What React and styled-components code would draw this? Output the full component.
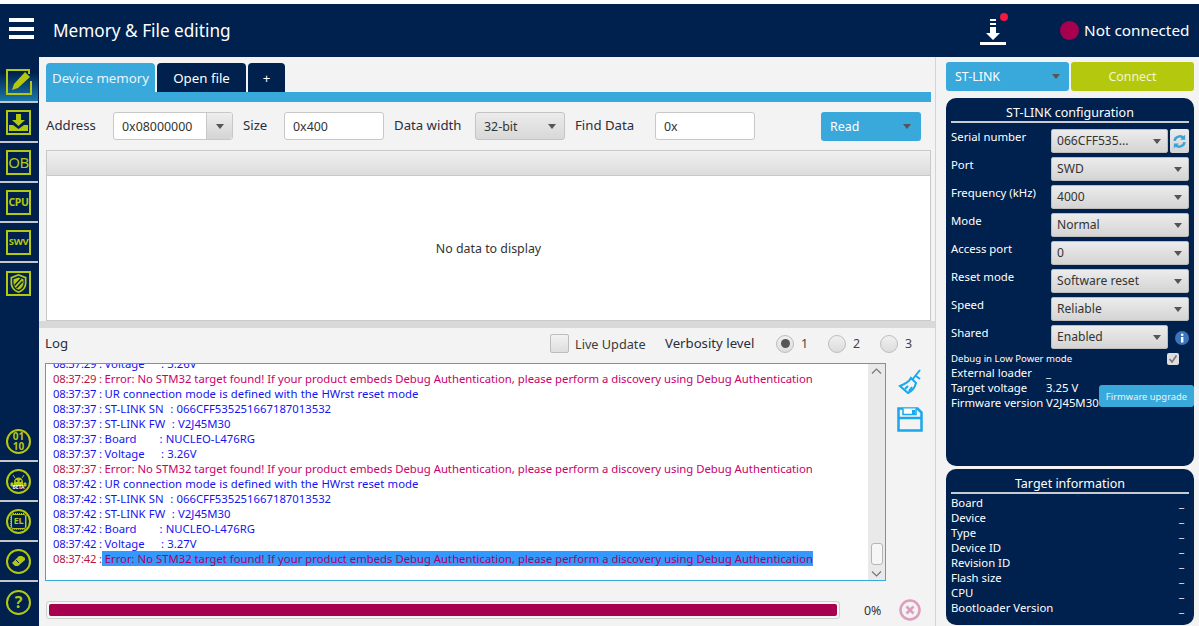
import React from 'react';
import styled, { createGlobalStyle } from 'styled-components';

const navy = '#00214d';
const lime = '#b4c90e';
const sky = '#39a9dc';

const GlobalStyle = createGlobalStyle`
  html, body { margin: 0; padding: 0; background: #fff; }
  body { font-family: 'Noto Sans', 'Open Sans', sans-serif; overflow: hidden; }
  * { box-sizing: border-box; }
`;

const Page = styled.div`
  width: 1199px;
  height: 626px;
  padding-top: 4px;
  display: flex;
  flex-direction: column;
  overflow: hidden;
  background: #fff;
`;

const Header = styled.header`
  height: 53px;
  flex: none;
  background: ${navy};
  display: flex;
  align-items: center;
  color: #fff;
`;

const Burger = styled.div`
  width: 25px;
  margin: -4px 0 0 9px;
  display: flex;
  flex-direction: column;
  gap: 4.5px;
  span { display: block; height: 4px; background: #fff; }
`;

const HeaderTitle = styled.div`
  margin-left: 19px;
  font-size: 17.2px;
  flex: 1;
  margin-top: -1px;
`;

const DownloadWrap = styled.div`
  width: 28px;
  height: 35px;
  margin-right: 52px;
`;

const Status = styled.div`
  display: flex;
  align-items: center;
  width: 130px;
  margin-right: 9px;
  gap: 5px;
  font-size: 15.3px;
  margin-top: -1px;
  white-space: nowrap;
`;

const StatusDot = styled.span`
  width: 19px;
  height: 19px;
  border-radius: 50%;
  background: #a6004f;
  flex: none;
`;

const Body = styled.div`
  flex: 1;
  display: flex;
  min-height: 0;
`;

const Sidebar = styled.nav`
  width: 39px;
  flex: none;
  background: ${navy};
  display: flex;
  flex-direction: column;
  justify-content: space-between;
  padding: 6px 0 4px;
`;

const SideGroup = styled.div`
  display: flex;
  flex-direction: column;
`;

const SideItem = styled.div`
  height: 40px;
  width: 38px;
  display: flex;
  align-items: center;
  padding-left: 6px;
  border-bottom: ${p => (p.$last ? 'none' : '2px solid #c4c8cc')};
  background: ${p => (p.$active ? 'linear-gradient(180deg, #00214d 0%, #00214d 25%, #1a77a8 100%)' : 'transparent')};
`;

const IconBox = styled.div`
  width: 25px;
  height: 25px;
  border: 2px solid ${lime};
  color: ${lime};
  display: flex;
  align-items: center;
  justify-content: center;
  font-weight: ${p => (p.$bold ? 700 : 400)};
  font-size: ${p => p.$size || 11}px;
  line-height: 1;
  overflow: hidden;
  letter-spacing: -0.4px;
`;

const RoundIcon = styled.div`
  position: relative;
  width: 25px;
  height: 25px;
  border-radius: 50%;
  border: 2px solid ${lime};
  color: ${lime};
  display: flex;
  flex-direction: column;
  align-items: center;
  justify-content: center;
  font-weight: 700;
  font-size: ${p => p.$size || 10}px;
  line-height: 10px;
`;

const BitsText = styled.span`
  width: 14px;
  text-align: center;
  white-space: normal;
`;

const BetaTag = styled.span`
  position: absolute;
  bottom: 2px;
  left: 0;
  right: 0;
  text-align: center;
  font-size: 5px;
  line-height: 5px;
  color: #fff;
`;

const ChipText = styled.span`
  width: 15px;
  height: 15px;
  border: 1.5px solid ${lime};
  border-radius: 2px;
  outline: 1px dotted ${lime};
  font-size: 9px;
  line-height: 12px;
  text-align: center;
  letter-spacing: -0.3px;
`;

const Main = styled.main`
  width: 897px;
  flex: none;
  background: #f3f3f3;
  display: flex;
  flex-direction: column;
  border-right: 1px solid #d4d4d4;
`;

const EditorArea = styled.section`
  height: 271px;
  flex: none;
  padding: 6px 4px 0 7px;
  background: #f3f3f3;
  display: flex;
  flex-direction: column;
  border-bottom: 7px solid #d9d9d9;
`;

const Tabs = styled.div`
  display: flex;
  gap: 2px;
  height: 29px;
`;

const Tab = styled.div`
  width: ${p => p.$w}px;
  border-radius: 4px 4px 0 0;
  background: ${p => (p.$active ? sky : navy)};
  color: ${p => (p.$active ? '#e8f4fb' : '#fff')};
  display: flex;
  align-items: center;
  justify-content: center;
  font-size: 13.3px;
`;

const TabLine = styled.div`
  height: 10px;
  background: ${sky};
  flex: none;
`;

const Toolbar = styled.div`
  height: 48px;
  flex: none;
  display: flex;
  align-items: center;
  font-size: 13.2px;
  color: #2d2d3a;
`;

const ToolLabel = styled.span`
  margin-left: ${p => p.$ml || 0}px;
  width: ${p => p.$w}px;
  margin-top: -2px;
`;

const TextField = styled.div`
  width: ${p => p.$w}px;
  height: 28px;
  background: #fff;
  border: 1px solid #c8c8c8;
  border-radius: 3px;
  display: flex;
  align-items: center;
  padding-left: 8px;
  font-size: 12.4px;
  color: #333;
`;

const Combo = styled(TextField)`
  padding-right: 0;
  justify-content: space-between;
`;

const ComboArrow = styled.span`
  width: 26px;
  height: 100%;
  border-left: 1px solid #c8c8c8;
  background: linear-gradient(#eee, #d4d4d4);
  border-radius: 0 3px 3px 0;
  display: flex;
  align-items: center;
  justify-content: center;
`;

const Caret = styled.i`
  display: block;
  width: 0;
  height: 0;
  border-left: 4.5px solid transparent;
  border-right: 4.5px solid transparent;
  border-top: 5px solid ${p => p.$color || '#555'};
`;

const GreySelect = styled.div`
  width: ${p => p.$w}px;
  height: 28px;
  background: linear-gradient(#ececec, #d8d8d8);
  border: 1px solid #c4c4c4;
  border-radius: 3px;
  display: flex;
  align-items: center;
  justify-content: space-between;
  padding: 0 8px;
  font-size: 12.4px;
  color: #333;
`;

const ReadButton = styled.div`
  width: 100px;
  height: 29px;
  margin-left: 66px;
  background: ${sky};
  border-radius: 3px;
  color: #fff;
  display: flex;
  align-items: center;
  justify-content: space-between;
  padding: 0 10px 0 9px;
  font-size: 12.4px;
`;

const DataTable = styled.div`
  flex: 1;
  background: #fff;
  border: 1px solid #c9c9c9;
  display: flex;
  flex-direction: column;
`;

const TableHead = styled.div`
  height: 25px;
  flex: none;
  background: linear-gradient(#f0f0f0, #dcdcdc);
  border-bottom: 1px solid #c9c9c9;
`;

const TableEmpty = styled.div`
  flex: 1;
  display: flex;
  align-items: center;
  justify-content: center;
  font-size: 12.4px;
  color: #333;
`;

const LogArea = styled.section`
  flex: 1;
  min-height: 0;
  padding: 0 0 0 6px;
  display: flex;
  flex-direction: column;
`;

const LogBar = styled.div`
  height: 35px;
  flex: none;
  display: flex;
  align-items: center;
  font-size: 13.2px;
  color: #2d2d3a;
  padding-bottom: 4px;
`;

const LogTitle = styled.span`
  margin-right: 470px;
  width: 35px;
  margin-top: -1px;
`;

const CheckSquare = styled.span`
  width: 19px;
  height: 19px;
  border: 1px solid #bdbdbd;
  background: linear-gradient(#f2f2f2, #dedede);
  border-radius: 2px;
`;

const LiveLabel = styled.span`
  margin-left: 6px;
  width: 90px;
  font-size: 12.7px;
  color: #3a3a3a;
`;

const VerbosityLabel = styled.span`
  width: 111px;
  margin-top: -2px;
`;

const Radio = styled.span`
  width: 18px;
  height: 18px;
  border-radius: 50%;
  border: 1px solid #bdbdbd;
  background: linear-gradient(#f0f0f0, #dcdcdc);
  display: flex;
  align-items: center;
  justify-content: center;
  &::after {
    content: '';
    display: ${p => (p.$on ? 'block' : 'none')};
    width: 9px;
    height: 9px;
    border-radius: 50%;
    background: #555;
  }
`;

const RadioText = styled.span`
  width: 34px;
  padding-left: 7px;
  font-size: 12.4px;
  color: #444;
`;

const LogRow = styled.div`
  display: flex;
  height: 218px;
  flex: none;
`;

const LogBox = styled.div`
  width: 841px;
  flex: none;
  border: 1px solid ${sky};
  background: #fff;
  display: flex;
  overflow: hidden;
`;

const LogViewport = styled.div`
  flex: 1;
  min-width: 0;
  overflow: hidden;
`;

const LogText = styled.div`
  padding-left: 7px;
  margin-top: -8px;
  font-size: 11.31px;
  line-height: 15px;
  white-space: pre;
`;

const LogLine = styled.div`
  height: 15px;
  color: ${p => (p.$error ? '#c8006a' : '#1414f0')};
  word-spacing: ${p => (p.$error ? 0 : 0.35)}px;
`;

const Time = styled.span`
  letter-spacing: -0.2px;
  word-spacing: 0;
  color: ${p => (p.$error ? '#b5173f' : '#1414f0')};
`;

const Selected = styled.span`
  background: #3399ff;
  color: #b0005f;
`;

const Scrollbar = styled.div`
  width: 17px;
  flex: none;
  background: #e9e9e9;
  display: flex;
  flex-direction: column;
  justify-content: space-between;
  align-items: center;
  padding: 4px 0 3px;
`;

const ThumbGroup = styled.div`
  display: flex;
  flex-direction: column;
  align-items: center;
  gap: 6px;
`;

const Thumb = styled.div`
  width: 12px;
  height: 22px;
  border: 1px solid #b5b5b5;
  border-radius: 3px;
  background: #f6f6f6;
`;

const LogTools = styled.div`
  display: flex;
  flex-direction: column;
  align-items: center;
  padding: 6px 0 0 11px;
  gap: 12px;
`;

const ProgressRow = styled.div`
  display: flex;
  align-items: center;
  height: 18px;
  margin-top: 20px;
  flex: none;
`;

const ProgressTrack = styled.div`
  width: 794px;
  height: 18px;
  border: 1px solid #cfcfcf;
  border-radius: 3px;
  background: #f6f6f6;
  padding: 2px;
  margin-left: 1px;
`;

const ProgressFill = styled.div`
  height: 100%;
  border-radius: 2px;
  background: #a6004f;
`;

const Percent = styled.span`
  margin-left: 24px;
  width: 35px;
  font-size: 12.4px;
  color: #333;
`;

const Aside = styled.aside`
  flex: 1;
  padding: 5px 5px 0 10px;
  background: #f3f3f3;
  display: flex;
  flex-direction: column;
`;

const ConnectRow = styled.div`
  display: flex;
  gap: 2px;
  height: 29px;
  flex: none;
`;

const ProbeSelect = styled.div`
  width: 123px;
  background: ${sky};
  border-radius: 3px;
  color: #fff;
  display: flex;
  align-items: center;
  justify-content: space-between;
  padding: 0 9px;
  font-size: 12.4px;
`;

const ConnectButton = styled.div`
  width: 123px;
  background: ${lime};
  border-radius: 3px;
  color: #f2f6d0;
  display: flex;
  align-items: center;
  justify-content: center;
  font-size: 12.4px;
`;

const Panel = styled.div`
  position: relative;
  width: 248px;
  height: ${p => p.$h}px;
  margin-top: ${p => p.$mt}px;
  flex: none;
  background: ${navy};
  border-radius: 10px;
  color: #fff;
  padding: 7px 5px 0;
`;

const PanelTitle = styled.div`
  height: 18px;
  margin-bottom: ${p => p.$mb}px;
  border-bottom: 2px solid #c9ccd2;
  font-size: 12.5px;
  line-height: 15px;
  text-align: center;
`;

const ConfigRow = styled.div`
  display: flex;
  height: 28px;
  align-items: flex-start;
  font-size: 11.35px;
  line-height: 16px;
`;

const ConfigLabel = styled.span`
  width: 100px;
  flex: none;
  margin-top: 2px;
`;

const ConfigSelect = styled.div`
  width: ${p => p.$w || 138}px;
  height: 24px;
  margin-top: 2px;
  background: linear-gradient(#ececec, #d4d4d4);
  border-radius: 2px;
  border: 1px solid #bcbcbc;
  color: #333;
  display: flex;
  align-items: center;
  justify-content: space-between;
  padding: 0 6px 0 5px;
  font-size: 12.1px;
  flex: none;
`;

const RefreshButton = styled.div`
  width: 19px;
  height: 24px;
  margin: 2px 0 0 2px;
  background: linear-gradient(#ececec, #d4d4d4);
  border-radius: 2px;
  display: flex;
  align-items: center;
  justify-content: center;
`;

const InfoWrap = styled.div`
  margin: 8px 0 0 7px;
  display: flex;
`;

const DebugRow = styled.div`
  display: flex;
  align-items: center;
  justify-content: space-between;
  height: 13px;
  padding-right: 10px;
  font-size: 9.6px;
  margin-top: 1px;
`;

const TinyCheck = styled.span`
  width: 12px;
  height: 12px;
  border-radius: 2px;
  background: #dedede;
  display: flex;
  align-items: center;
  justify-content: center;
`;

const InfoRow = styled.div`
  display: flex;
  height: 15px;
  font-size: 11.35px;
  line-height: 15px;
`;

const InfoKey = styled.span`
  width: 95px;
  flex: none;
`;

const FirmwareButton = styled.div`
  position: absolute;
  right: 0;
  top: 287px;
  width: 95px;
  height: 22px;
  border-radius: 3px;
  background: ${sky};
  color: #e8f4fb;
  font-size: 9.4px;
  display: flex;
  align-items: center;
  justify-content: center;
`;

const TargetRow = styled.div`
  display: flex;
  justify-content: space-between;
  height: 15px;
  font-size: 11.35px;
  line-height: 15px;
  padding-right: 5px;
`;

const DownloadIcon = () => (
  <svg width="28" height="35" viewBox="0 0 28 35" fill="#fff">
    <rect x="10" y="6" width="6" height="2" />
    <rect x="10" y="10" width="6" height="2" />
    <path d="M10 14h6v6h4l-7 7-7-7h4z" />
    <rect x="0" y="29" width="26" height="3" />
    <circle cx="24" cy="4" r="4" fill="#f0193f" />
  </svg>
);

const PencilIcon = () => (
  <svg width="27" height="26" viewBox="0 0 27 26" fill="none">
    <path d="M23 5V1H1v24h24V12" stroke={lime} strokeWidth="2" />
    <path d="M6 21l2-6L19 3l5 5-12 11z" fill={lime} />
  </svg>
);

const DownloadBoxIcon = () => (
  <svg width="21" height="21" viewBox="0 0 21 21" fill={lime}>
    <path d="M8 2h5v6h4l-6.500 6L4 8h4z" />
    <path d="M1 13h4l5.500 4 5.500-4h4v6H1z" />
  </svg>
);

const ShieldIcon = () => (
  <svg width="21" height="21" viewBox="0 0 21 21">
    <path d="M10.500 1l8 3v6c0 5-3.500 8.500-8 10-4.500-1.500-8-5-8-10V4z" fill={lime} />
    <path d="M10.500 2.800l6.300 2.400v4.800c0 4-2.800 7-6.300 8.300-3.500-1.300-6.300-4.300-6.300-8.300V5.200z" fill={navy} />
    <path d="M10.500 4.500l5 1.800v3.700c0 3.200-2.200 5.500-5 6.800-2.800-1.300-5-3.600-5-6.800V6.300z" fill={lime} />
    <path d="M6.500 12.500l6.500-7M8.500 15l6-6.500" stroke={navy} strokeWidth="1.400" />
  </svg>
);

const BugIcon = () => (
  <svg width="17" height="13" viewBox="0 0 17 13" fill={lime}>
    <path d="M4 7a4.500 4.500 0 0 1 9 0v4H4z" />
    <path d="M1 8h2v3H1zM14 8h2v3h-2zM5 3L3 0M12 3l2-3" stroke={lime} />
    <circle cx="6.500" cy="6" r="1" fill={navy} />
    <circle cx="10.500" cy="6" r="1" fill={navy} />
  </svg>
);

const EraserIcon = () => (
  <svg width="15" height="12" viewBox="0 0 15 12" fill={lime}>
    <path d="M1 8l7-7h3l3 2v2l-7 6H4z" />
    <path d="M5 5l3 3" stroke={navy} />
  </svg>
);

const BroomIcon = () => (
  <svg width="24" height="26" viewBox="0 0 24 26" fill="none" stroke="#1aa7ec" strokeWidth="2">
    <path d="M22 1l-8 10M18 7l4 3" />
    <path d="M13 9c-2 4-6 6-11 8l8 7c4-2 7-6 8-10z" />
    <path d="M7 20l3-3M11 22l3-4" />
  </svg>
);

const SaveIcon = () => (
  <svg width="26" height="25" viewBox="0 0 26 25" fill="none" stroke="#1aa7ec" strokeWidth="2.500">
    <path d="M1.500 1.500h19l4 4v18h-23z" />
    <path d="M1.500 11h23" />
    <path d="M6 1.500v6h13v-6" strokeWidth="1.500" fill="#fff" />
    <rect x="15" y="3" width="3" height="4" fill="#1aa7ec" stroke="none" />
  </svg>
);

const CancelIcon = () => (
  <svg width="22" height="22" viewBox="0 0 22 22" fill="none" stroke="#dd9dbd" strokeWidth="2.500">
    <circle cx="11" cy="11" r="9.500" />
    <path d="M7.500 7.500l7 7M14.500 7.500l-7 7" />
  </svg>
);

const RefreshIcon = () => (
  <svg width="15" height="15" viewBox="0 0 24 24" fill="none" stroke="#3aa3d8" strokeWidth="4">
    <path d="M4 11a8.500 8.500 0 0 1 15-4M20 13a8.500 8.500 0 0 1-15 4" />
    <path d="M21 1v8h-8zM3 23v-8h8z" fill="#3aa3d8" stroke="none" />
  </svg>
);

const InfoIcon = () => (
  <svg width="14" height="14" viewBox="0 0 14 14">
    <circle cx="7" cy="7" r="7" fill="#3b74b8" />
    <rect x="6" y="6" width="2.400" height="5.500" fill="#fff" />
    <circle cx="7.200" cy="3.800" r="1.300" fill="#fff" />
  </svg>
);

const logLines = [
  { t: '08:37:29', m: 'Voltage     : 3.26V' },
  { t: '08:37:29', m: 'Error: No STM32 target found! If your product embeds Debug Authentication, please perform a discovery using Debug Authentication', error: true },
  { t: '08:37:37', m: 'UR connection mode is defined with the HWrst reset mode' },
  { t: '08:37:37', m: 'ST-LINK SN  : 066CFF535251667187013532' },
  { t: '08:37:37', m: 'ST-LINK FW  : V2J45M30' },
  { t: '08:37:37', m: 'Board       : NUCLEO-L476RG' },
  { t: '08:37:37', m: 'Voltage     : 3.26V' },
  { t: '08:37:37', m: 'Error: No STM32 target found! If your product embeds Debug Authentication, please perform a discovery using Debug Authentication', error: true },
  { t: '08:37:42', m: 'UR connection mode is defined with the HWrst reset mode' },
  { t: '08:37:42', m: 'ST-LINK SN  : 066CFF535251667187013532' },
  { t: '08:37:42', m: 'ST-LINK FW  : V2J45M30' },
  { t: '08:37:42', m: 'Board       : NUCLEO-L476RG' },
  { t: '08:37:42', m: 'Voltage     : 3.27V' },
];

const configRows = [
  { label: 'Port', value: 'SWD' },
  { label: 'Frequency (kHz)', value: '4000' },
  { label: 'Mode', value: 'Normal' },
  { label: 'Access port', value: '0' },
  { label: 'Reset mode', value: 'Software reset' },
  { label: 'Speed', value: 'Reliable' },
];

const targetRows = ['Board', 'Device', 'Type', 'Device ID', 'Revision ID', 'Flash size', 'CPU', 'Bootloader Version'];

const App = () => (
  <>
    <GlobalStyle />
    <Page>
      <Header>
        <Burger><span /><span /><span /></Burger>
        <HeaderTitle>Memory &amp; File editing</HeaderTitle>
        <DownloadWrap><DownloadIcon /></DownloadWrap>
        <Status><StatusDot />Not connected</Status>
      </Header>
      <Body>
        <Sidebar>
          <SideGroup>
            <SideItem $active><PencilIcon /></SideItem>
            <SideItem><IconBox><DownloadBoxIcon /></IconBox></SideItem>
            <SideItem><IconBox $size={15}>OB</IconBox></SideItem>
            <SideItem><IconBox $bold $size={10.5}>CPU</IconBox></SideItem>
            <SideItem><IconBox $bold $size={9.5}>SWV</IconBox></SideItem>
            <SideItem $last><IconBox><ShieldIcon /></IconBox></SideItem>
          </SideGroup>
          <SideGroup>
            <SideItem><RoundIcon><BitsText>01 10</BitsText></RoundIcon></SideItem>
            <SideItem><RoundIcon><BugIcon /><BetaTag>BETA</BetaTag></RoundIcon></SideItem>
            <SideItem><RoundIcon><ChipText>EL</ChipText></RoundIcon></SideItem>
            <SideItem><RoundIcon><EraserIcon /></RoundIcon></SideItem>
            <SideItem $last><RoundIcon $size={16}>?</RoundIcon></SideItem>
          </SideGroup>
        </Sidebar>

        <Main>
          <EditorArea>
            <Tabs>
              <Tab $active $w={109}>Device memory</Tab>
              <Tab $w={89}>Open file</Tab>
              <Tab $w={37}>+</Tab>
            </Tabs>
            <TabLine />
            <Toolbar>
              <ToolLabel $w={67}>Address</ToolLabel>
              <Combo $w={120}>0x08000000<ComboArrow><Caret /></ComboArrow></Combo>
              <ToolLabel $ml={10} $w={41}>Size</ToolLabel>
              <TextField $w={100}>0x400</TextField>
              <ToolLabel $ml={10} $w={81}>Data width</ToolLabel>
              <GreySelect $w={90}>32-bit<Caret /></GreySelect>
              <ToolLabel $ml={10} $w={80}>Find Data</ToolLabel>
              <TextField $w={100}>0x</TextField>
              <ReadButton>Read<Caret /></ReadButton>
            </Toolbar>
            <DataTable>
              <TableHead />
              <TableEmpty>No data to display</TableEmpty>
            </DataTable>
          </EditorArea>

          <LogArea>
            <LogBar>
              <LogTitle>Log</LogTitle>
              <CheckSquare />
              <LiveLabel>Live Update</LiveLabel>
              <VerbosityLabel>Verbosity level</VerbosityLabel>
              <Radio $on /><RadioText>1</RadioText>
              <Radio /><RadioText>2</RadioText>
              <Radio /><RadioText>3</RadioText>
            </LogBar>
            <LogRow>
              <LogBox>
                <LogViewport>
                  <LogText>
                    {logLines.map((l, i) => (
                      <LogLine key={i} $error={l.error}>
                        <Time $error={l.error}>{l.t} : </Time>{l.m}
                      </LogLine>
                    ))}
                    <LogLine $error>
                      <Time $error>08:37:42 :</Time>
                      <Selected> Error: No STM32 target found! If your product embeds Debug Authentication, please perform a discovery using Debug Authentication</Selected>
                    </LogLine>
                  </LogText>
                </LogViewport>
                <Scrollbar>
                  <svg width="11" height="6" viewBox="0 0 11 6" fill="none" stroke="#777" strokeWidth="1.200"><path d="M1 5.500l4.500-4.500 4.500 4.500" /></svg>
                  <ThumbGroup>
                    <Thumb />
                    <svg width="11" height="6" viewBox="0 0 11 6" fill="none" stroke="#777" strokeWidth="1.200"><path d="M1 .5l4.500 4.500 4.500-4.500" /></svg>
                  </ThumbGroup>
                </Scrollbar>
              </LogBox>
              <LogTools>
                <BroomIcon />
                <SaveIcon />
              </LogTools>
            </LogRow>
            <ProgressRow>
              <ProgressTrack><ProgressFill /></ProgressTrack>
              <Percent>0%</Percent>
              <CancelIcon />
            </ProgressRow>
          </LogArea>
        </Main>

        <Aside>
          <ConnectRow>
            <ProbeSelect>ST-LINK<Caret /></ProbeSelect>
            <ConnectButton>Connect</ConnectButton>
          </ConnectRow>
          <Panel $h={368} $mt={7}>
            <PanelTitle $mb={4}>ST-LINK configuration</PanelTitle>
            <ConfigRow>
              <ConfigLabel>Serial number</ConfigLabel>
              <ConfigSelect $w={117}>066CFF535...<Caret /></ConfigSelect>
              <RefreshButton><RefreshIcon /></RefreshButton>
            </ConfigRow>
            {configRows.map(r => (
              <ConfigRow key={r.label}>
                <ConfigLabel>{r.label}</ConfigLabel>
                <ConfigSelect>{r.value}<Caret /></ConfigSelect>
              </ConfigRow>
            ))}
            <ConfigRow>
              <ConfigLabel>Shared</ConfigLabel>
              <ConfigSelect $w={117}>Enabled<Caret /></ConfigSelect>
              <InfoWrap><InfoIcon /></InfoWrap>
            </ConfigRow>
            <DebugRow>
              Debug in Low Power mode
              <TinyCheck>
                <svg width="10" height="10" viewBox="0 0 10 10" fill="none" stroke="#777" strokeWidth="1.600"><path d="M1.500 5l2.500 3 4.500-6.500" /></svg>
              </TinyCheck>
            </DebugRow>
            <InfoRow><InfoKey>External loader</InfoKey>_</InfoRow>
            <InfoRow><InfoKey>Target voltage</InfoKey>3.25 V</InfoRow>
            <InfoRow><InfoKey>Firmware version</InfoKey>V2J45M30</InfoRow>
            <FirmwareButton>Firmware upgrade</FirmwareButton>
          </Panel>
          <Panel $h={156} $mt={3}>
            <PanelTitle $mb={1}>Target information</PanelTitle>
            {targetRows.map(r => (
              <TargetRow key={r}><span>{r}</span><span>_</span></TargetRow>
            ))}
          </Panel>
        </Aside>
      </Body>
    </Page>
  </>
);

export default App;
